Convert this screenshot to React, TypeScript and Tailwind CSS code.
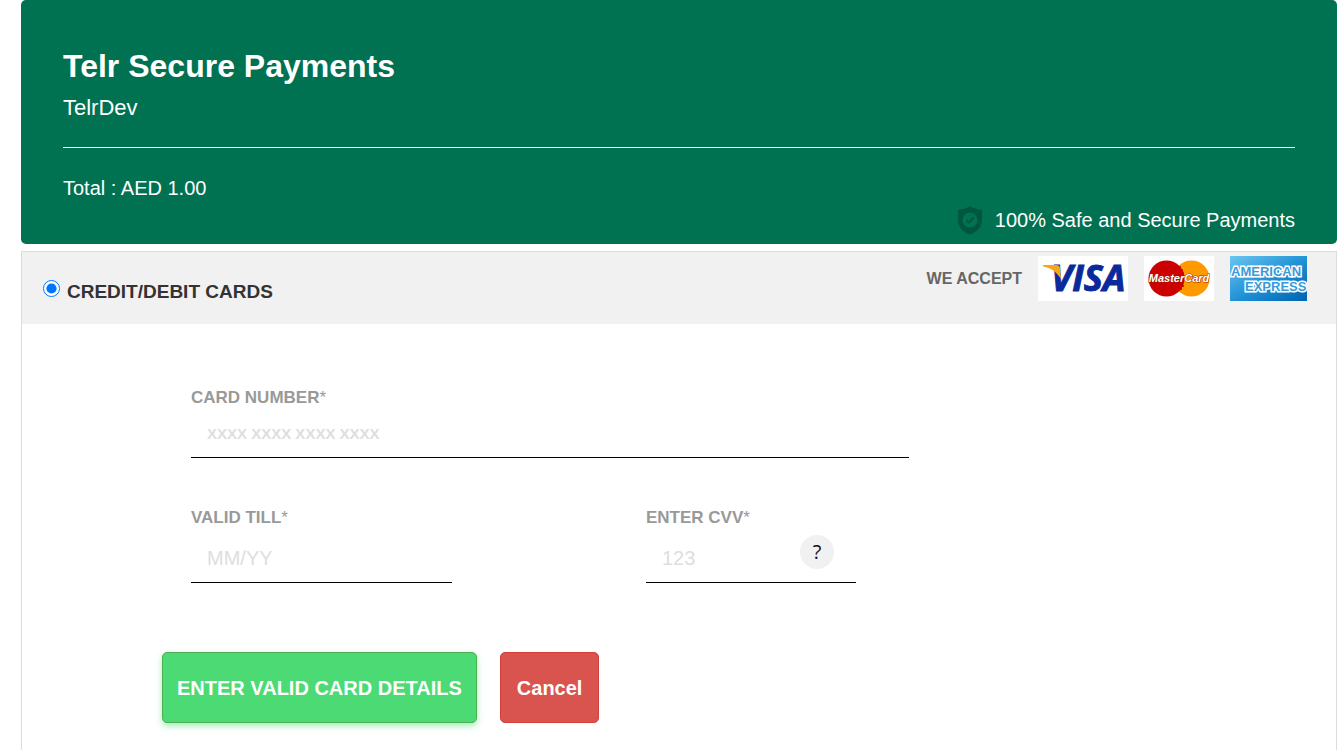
import { useState } from "react";

const fieldLabel = "text-[17px] leading-5 font-bold text-[#999999]";
const fieldInput =
  "w-full h-[50px] px-4 pt-[2px] bg-transparent border-b border-black text-black outline-none placeholder:text-[#dedede]";

export default function App() {
  const [cardNumber, setCardNumber] = useState("");
  const [validTill, setValidTill] = useState("");
  const [cvv, setCvv] = useState("");

  return (
    <div className="min-h-screen flex flex-col bg-white pl-[21px] pr-px font-['Liberation_Sans',Arial,sans-serif]">
      {/* HEADER */}
      <header className="bg-[#007151] text-white rounded-[5px] px-[42px] pt-12 pb-2">
        <h1 className="text-[32px] leading-9 font-bold">Telr Secure Payments</h1>
        <p className="text-[22px] leading-8 mt-2 pb-[23px] border-b border-white">TelrDev</p>
        <p className="text-[20px] leading-8 mt-6">Total : AED 1.00</p>
        <div className="flex items-center justify-end gap-3 text-[20px] leading-8">
          <ShieldIcon />
          <span>100% Safe and Secure Payments</span>
        </div>
      </header>

      {/* PAYMENT METHOD */}
      <main className="flex-1 mt-[7px] border border-b-0 border-[#dcdcdc]">
        <div className="flex items-start justify-between bg-[#f1f1f1] h-[72px] pl-[21px] pr-[29px]">
          <label className="flex items-start gap-[7px] pt-7 text-[19px] leading-6 font-bold text-[#333333]">
            <input type="radio" name="method" defaultChecked className="size-[17px] m-0 accent-[#0075ff]" />
            CREDIT/DEBIT CARDS
          </label>
          <div className="flex items-center gap-4 pt-1">
            <span className="text-[16px] leading-5 font-bold text-[#666666]">WE ACCEPT</span>
            <VisaLogo />
            <MasterCardLogo />
            <AmexLogo />
          </div>
        </div>

        {/* CARD FORM */}
        <form className="pt-16 pb-6" onSubmit={(e) => e.preventDefault()}>
          <div className="ml-[169px] mr-8 max-w-[718px]">
            <label htmlFor="card" className={`block ${fieldLabel}`}>
              CARD NUMBER<span className="font-normal">*</span>
            </label>
            <input
              id="card"
              value={cardNumber}
              onChange={(e) => setCardNumber(e.target.value)}
              placeholder="XXXX XXXX XXXX XXXX"
              className={`${fieldInput} text-[15px] font-bold`}
            />
            <div className="flex justify-between mt-[50px] pr-[53px]">
              <div className="w-[261px]">
                <label htmlFor="valid" className={`block ${fieldLabel}`}>
                  VALID TILL<span className="font-normal">*</span>
                </label>
                <input
                  id="valid"
                  value={validTill}
                  onChange={(e) => setValidTill(e.target.value)}
                  placeholder="MM/YY"
                  className={`${fieldInput} mt-[5px] text-[20px]`}
                />
              </div>
              <div className="relative w-[210px]">
                <label htmlFor="cvv" className={`block ${fieldLabel}`}>
                  ENTER CVV<span className="font-normal">*</span>
                </label>
                <input
                  id="cvv"
                  value={cvv}
                  onChange={(e) => setCvv(e.target.value)}
                  placeholder="123"
                  className={`${fieldInput} mt-[5px] text-[20px]`}
                />
                <button
                  type="button"
                  className="absolute right-[22px] top-[27px] size-[34px] rounded-full bg-[#f1f1f1] text-[#111111] text-[20px] leading-8 font-medium font-['Open_Sans',sans-serif]"
                >
                  ?
                </button>
              </div>
            </div>
          </div>

          <div className="flex gap-[23px] mt-[69px] ml-[140px] text-[20px] leading-6 font-bold text-white">
            <button
              type="submit"
              className="h-[71px] px-[14px] rounded-[5px] border border-[#4caf50] bg-[#4bda74] shadow-[0_3px_6px_rgba(75,218,116,0.5)]"
            >
              ENTER VALID CARD DETAILS
            </button>
            <button type="button" className="h-[71px] px-4 rounded-[5px] border border-[#d43f3a] bg-[#d9534f]">
              Cancel
            </button>
          </div>
        </form>
      </main>
    </div>
  );
}

function ShieldIcon() {
  return (
    <svg width="26" height="30" viewBox="0 0 26 30" aria-hidden="true">
      <path d="M13 1C10 3.500 5 4.500 1 5V15C1 22 6 27 13 29.500C20 27 25 22 25 15V5C21 4.500 16 3.500 13 1Z" fill="#005640" />
      <circle cx="13" cy="15" r="7.500" fill="#007151" />
      <path d="M9.500 15.300L12 17.500L16.500 12.800" fill="none" stroke="#005640" strokeWidth="2.200" />
    </svg>
  );
}

function VisaLogo() {
  return (
    <svg width="90" height="45" viewBox="0 0 90 45" className="overflow-visible" role="img" aria-label="Visa">
      <rect width="90" height="45" fill="#ffffff" />
      <text
        x="13"
        y="35"
        fontSize="36"
        fontWeight="bold"
        fontStyle="italic"
        fontFamily="Open Sans, sans-serif"
        fill="#0a2a9c"
        stroke="#0a2a9c"
        strokeWidth="1"
      >
        VISA
      </text>
      <path d="M5 9H18C21 9 21.500 10 22 12L23 23C19 17 14 12 5 10.500Z" fill="#f9a51a" />
    </svg>
  );
}

function MasterCardLogo() {
  return (
    <svg width="70" height="45" viewBox="0 0 70 45" role="img" aria-label="MasterCard">
      <rect width="70" height="45" fill="#ffffff" />
      <circle cx="47.500" cy="22.500" r="18" fill="#ff9900" />
      <circle cx="22.500" cy="22.500" r="18" fill="#cc0000" />
      <path d="M32 11H37M34 14H39M35 17H40M35 30H40M33 33H38" stroke="#cc0000" strokeWidth="1.500" />
      <text
        x="35"
        y="26"
        textAnchor="middle"
        fontSize="11"
        fontWeight="bold"
        fontStyle="italic"
        fontFamily="Liberation Sans, sans-serif"
        fill="#ffffff"
        stroke="#a02000"
        strokeWidth="1"
        paintOrder="stroke"
      >
        MasterCard
      </text>
    </svg>
  );
}

function AmexLogo() {
  return (
    <svg width="77" height="45" viewBox="0 0 77 45" role="img" aria-label="American Express">
      <defs>
        <linearGradient id="amex" x1="0" y1="0" x2="1" y2="1">
          <stop offset="0" stopColor="#6cc5f0" />
          <stop offset="0.550" stopColor="#1c8fd4" />
          <stop offset="1" stopColor="#0063b0" />
        </linearGradient>
      </defs>
      <rect width="77" height="45" fill="url(#amex)" />
      <g
        fontSize="13"
        fontFamily="Liberation Sans, sans-serif"
        fontWeight="bold"
        fill="#3a9ad9"
        stroke="#ffffff"
        strokeWidth="3"
        strokeLinejoin="miter"
        strokeMiterlimit="2"
        paintOrder="stroke"
      >
        <text x="1" y="20">AMERICAN</text>
        <text x="15" y="35">EXPRESS</text>
      </g>
    </svg>
  );
}
